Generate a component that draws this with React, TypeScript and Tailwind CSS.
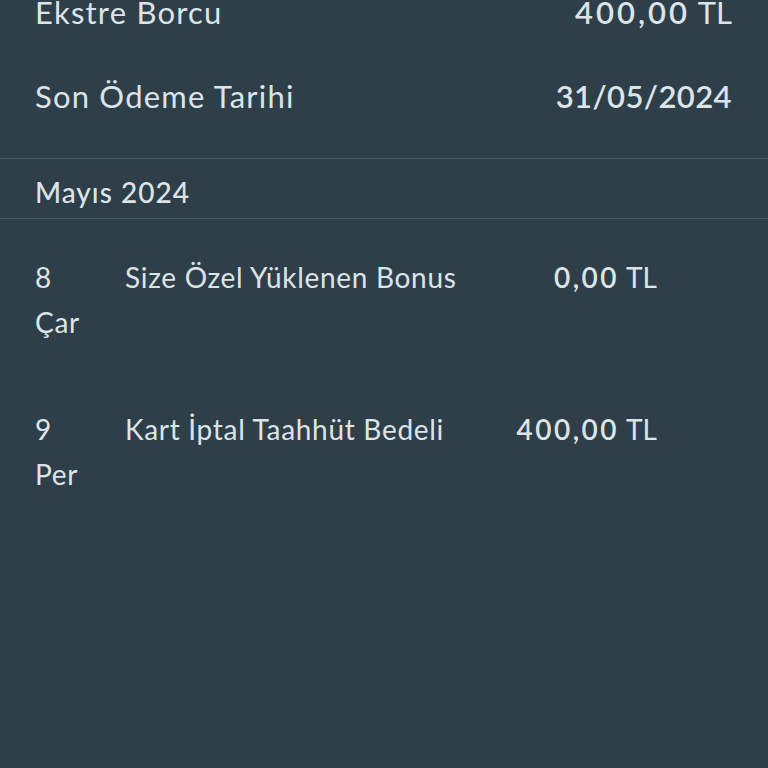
export default function App() {
  const rows = [
    { day: '8', name: 'Çar', desc: 'Size Özel Yüklenen Bonus', amount: '0,00' },
    { day: '9', name: 'Per', desc: 'Kart İptal Taahhüt Bedeli', amount: '400,00' },
  ]

  return (
    <div className="h-[768px] w-[768px] overflow-hidden bg-[#2e3f49] text-[#dde4e8] font-['Lato',sans-serif]">
      {/* Ekstre özeti */}
      <div className="-mt-[30px] pl-[35px] pr-[36px] pb-[20px]">
        <div className="flex justify-between leading-[84px]">
          <span className="text-[31px] tracking-[1.2px]">Ekstre Borcu</span>
          <span className="text-[31px] font-semibold">
            <span className="tracking-[3px]">400,00</span> <span className="font-normal">TL</span>
          </span>
        </div>
        <div className="flex justify-between leading-[84px]">
          <span className="text-[31px] tracking-[1.2px]">Son Ödeme Tarihi</span>
          <span className="text-[31px] font-semibold tracking-[0.4px]">31/05/2024</span>
        </div>
      </div>

      <div className="h-px bg-[#4a5a63]" />
      <div className="pl-[35px] pt-[13px] pb-[6px] leading-[40px] text-[28px] font-medium tracking-[1px]">Mayıs 2024</div>
      <div className="h-px bg-[#4a5a63]" />

      {/* Hareketler */}
      <div>
        {rows.map(r => (
          <div key={r.day} className="flex items-baseline pl-[35px] pr-[111px] pt-[36px] pb-[26px] text-[28px] leading-[45px]">
            <div className="w-[90px] tracking-[0.7px]">
              <div>{r.day}</div>
              <div>{r.name}</div>
            </div>
            <div className="flex-1 tracking-[0.7px]">{r.desc}</div>
            <div className="font-semibold">
              <span className="tracking-[2.5px]">{r.amount}</span> <span className="font-normal">TL</span>
            </div>
          </div>
        ))}
      </div>
    </div>
  )
}
